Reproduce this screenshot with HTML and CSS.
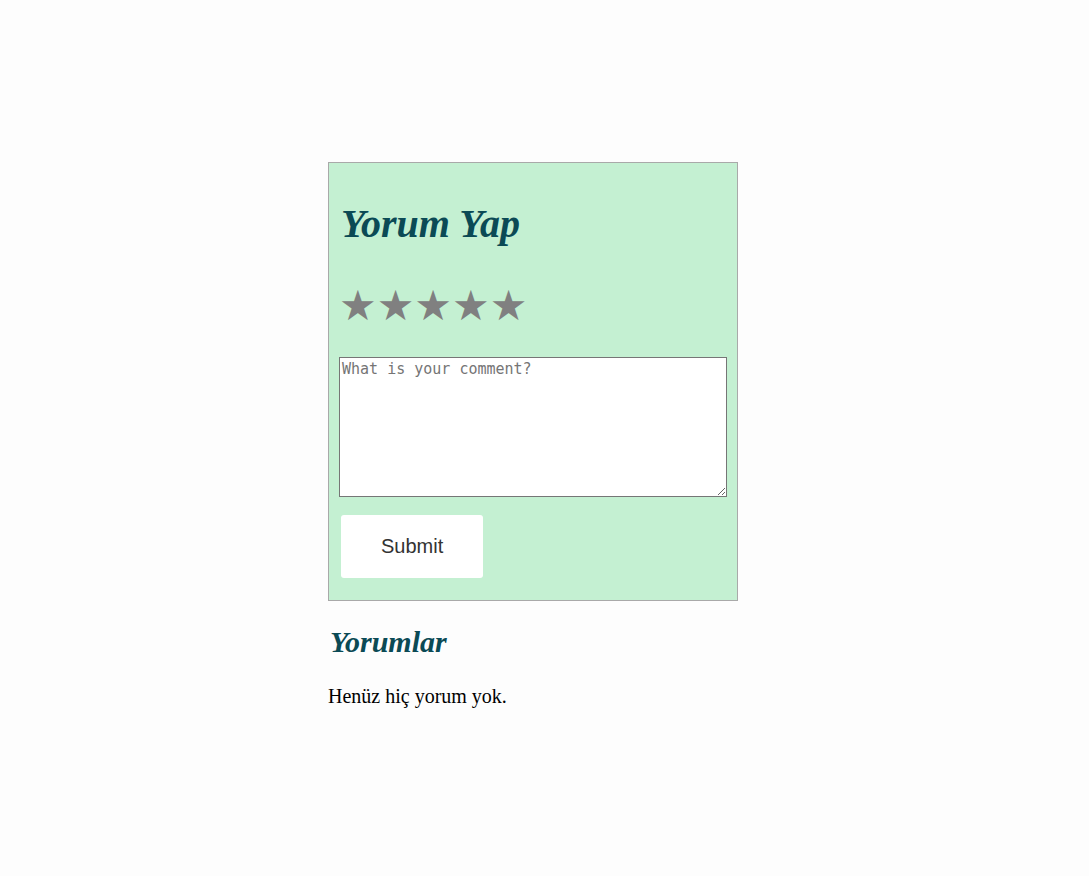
FILE: index.html
```html
<!DOCTYPE html>
<html>
<head>
    <title>Yorum Yap</title>
    <link rel="stylesheet" href="styles.css">
</head>
<body>
    <div class="container">
        <div class="comment-box">
            <h1>Yorum Yap</h1>
            <div class="stars">
                <span class="star">&#9733;</span><span class="star">&#9733;</span><span class="star">&#9733;</span><span class="star">&#9733;</span><span class="star">&#9733;</span>
            </div>
            <textarea class="comment-input" placeholder="What is your comment?"></textarea>
            <button class="submit-btn">Submit</button>
        </div>
        <h2>Yorumlar</h2>
        <p class="empty">Henüz hiç yorum yok.</p>
    </div>
</body>
</html>
```

FILE: styles.css
```css
body {
    font-family: 'Liberation Serif', serif;
    background-color: #fdfdfd;
    color: #000;
    margin: 0;
    padding: 0;
}

.container {
    width: 410px;
    margin: 162px 0 0 328px;
}

.comment-box {
    background-color: #c4f0d2;
    border: 1px solid #a9a9a9;
    padding: 10px 10px 22px 10px;
}

h1 {
    color: #0b4a55;
    font-size: 40px;
    font-style: italic;
    font-weight: bold;
    margin: 27px 0 27px 2px;
}

h2 {
    color: #0b4a55;
    font-size: 30px;
    font-style: italic;
    font-weight: bold;
    margin: 24px 0 0 2px;
}

.stars {
    font-family: 'DejaVu Sans', sans-serif;
    font-size: 42px;
    color: #808080;
    padding-top: 7px;
    margin: 0 0 27px 0;
}

.comment-input {
    display: block;
    width: 388px;
    height: 140px;
    box-sizing: border-box;
    margin: 0;
    border: 1px solid #767676;
    font-family: 'DejaVu Sans Mono', monospace;
    font-size: 15px;
    padding: 2px;
}

.submit-btn {
    display: block;
    margin: 18px 0 0 2px;
    padding: 20px 40px;
    font-family: 'Liberation Sans', sans-serif;
    font-size: 20px;
    color: #333;
    background-color: #fff;
    border: none;
    border-radius: 3px;
    cursor: pointer;
}

.empty {
    font-size: 20px;
    margin: 26px 0 0 0;
}
```
